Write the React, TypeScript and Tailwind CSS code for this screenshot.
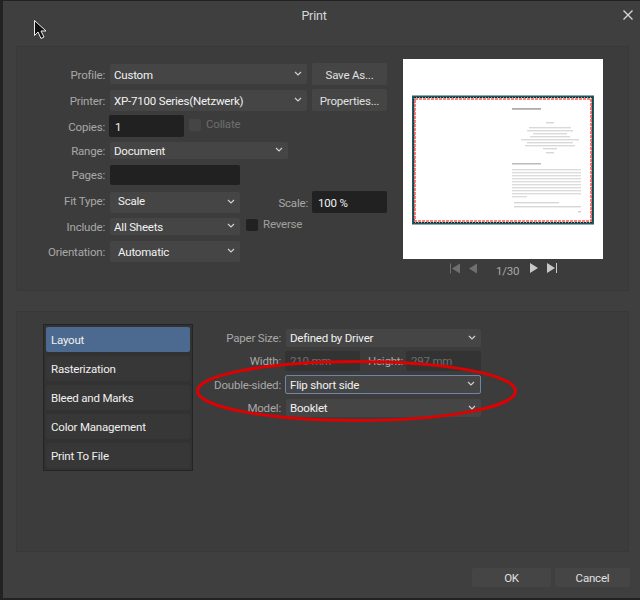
import React from "react";

const fontFace = "font-['Roboto',sans-serif]";

const Chevron: React.FC = () => (
  <svg width="8" height="5" viewBox="0 0 8 5" className="mb-[2px] shrink-0">
    <path d="M1 1l3 3 3-3" fill="none" stroke="#d0d0d0" strokeWidth="1.2" />
  </svg>
);

const Select: React.FC<{ value: string; className: string; textClass?: string }> = ({ value, className, textClass = "pt-[2px]" }) => (
  <div className={`flex items-center justify-between rounded-[2px] bg-[#454545] pr-[5px] text-[#f2f2f2] ${className}`}>
    <span className={`whitespace-nowrap ${textClass}`}>{value}</span>
    <Chevron />
  </div>
);

const Button: React.FC<{ label: string; className: string; textClass?: string }> = ({ label, className, textClass = "pt-[2px]" }) => (
  <div className={`flex items-center justify-center rounded-[2px] bg-[#454545] text-[#e0e0e0] ${className}`}>
    <span className={textClass}>{label}</span>
  </div>
);

const Label: React.FC<{ text: string; className?: string }> = ({ text, className = "" }) => (
  <span className={`text-right whitespace-nowrap text-[#a8a8a8] ${className}`}>{text}</span>
);

const Row: React.FC<{ label: string; className: string; labelClass?: string; children: React.ReactNode }> = ({ label, className, labelClass = "pt-[2px]", children }) => (
  <div className={`flex items-center ${className}`}>
    <Label text={label} className={`w-[88px] shrink-0 ${labelClass}`} />
    <div className="ml-[5px] flex items-center">{children}</div>
  </div>
);

const PreviewPage: React.FC = () => (
  <svg width="200" height="200" viewBox="0 0 200 200" className="block">
    <rect width="200" height="200" fill="#fff" />
    <rect x="10" y="37.5" width="180" height="127" fill="#fff" stroke="#1f5a5e" strokeWidth="2" />
    <rect x="11" y="38.5" width="178" height="125" fill="none" stroke="#1b2b2c" strokeWidth="1.2" strokeDasharray="2 1" />
    <rect x="12" y="40" width="176" height="122" fill="none" stroke="#ff5a5a" strokeWidth="1.6" strokeDasharray="3 1" />
    <g fill="#777" style={{ filter: "blur(0.7px)" }}>
      <rect x="109" y="49" width="29" height="1.8" opacity="0.6" />
      <rect x="143" y="63" width="8" height="1.4" opacity="0.3" />
      <rect x="126" y="68" width="42" height="1.4" opacity="0.28" />
      <rect x="124" y="71" width="46" height="1.4" opacity="0.28" />
      <rect x="130" y="74" width="34" height="1.4" opacity="0.28" />
      <rect x="127" y="77" width="40" height="1.4" opacity="0.28" />
      <rect x="118" y="80" width="58" height="1.4" opacity="0.28" />
      <rect x="124" y="83" width="46" height="1.4" opacity="0.28" />
      <rect x="122" y="86" width="50" height="1.4" opacity="0.28" />
      <rect x="140" y="89" width="14" height="1.4" opacity="0.28" />
      <rect x="143" y="93" width="8" height="1.4" opacity="0.3" />
      <rect x="109" y="104" width="29" height="1.5" opacity="0.5" />
      <rect x="109" y="110" width="69" height="1.4" opacity="0.26" />
      <rect x="109" y="113" width="69" height="1.4" opacity="0.26" />
      <rect x="109" y="116" width="69" height="1.4" opacity="0.26" />
      <rect x="109" y="119" width="69" height="1.4" opacity="0.26" />
      <rect x="109" y="122" width="69" height="1.4" opacity="0.26" />
      <rect x="109" y="125" width="69" height="1.4" opacity="0.26" />
      <rect x="109" y="128" width="69" height="1.4" opacity="0.26" />
      <rect x="109" y="131" width="69" height="1.4" opacity="0.26" />
      <rect x="109" y="134" width="69" height="1.4" opacity="0.26" />
      <rect x="109" y="137" width="15" height="1.4" opacity="0.26" />
      <rect x="111" y="143" width="45" height="1.4" opacity="0.3" />
      <rect x="111" y="147" width="67" height="1.4" opacity="0.3" />
      <rect x="175" y="152" width="3" height="1.4" opacity="0.35" />
    </g>
  </svg>
);

const Pager: React.FC = () => (
  <div className="mt-[2px] flex h-[16px] w-[200px] items-center">
    <svg width="154" height="14" viewBox="0 0 154 14" className="ml-[47px] block shrink-0">
      <path d="M0.5 1.5v10" stroke="#6f6f6f" strokeWidth="1" />
      <path d="M10 1.5v10l-8-5z" fill="#6f6f6f" />
      <path d="M27 1.5v10l-8-5z" fill="#6f6f6f" />
      <path d="M80 1v10l8-5z" fill="#c8c8c8" />
      <path d="M97 1v10l8-5z" fill="#c8c8c8" />
      <path d="M106.5 1v10" stroke="#c8c8c8" strokeWidth="1" />
    </svg>
  </div>
);

const App: React.FC = () => (
  <div className={`relative h-[600px] w-[640px] overflow-hidden border-t border-b-2 border-l-[3px] border-[#222] bg-[#3f3f3f] text-[11.5px] leading-none tracking-[-0.2px] ${fontFace}`}>
    <header className="relative flex h-[29px] items-center justify-center text-[12.5px] text-[#d8d8d8]">
      <span className="pt-[2px] pr-[15px]">Print</span>
      <svg width="10" height="10" viewBox="0 0 10 10" className="absolute top-[9px] right-[7px]">
        <path d="M.5.5l9 9M9.5.5l-9 9" stroke="#d8d8d8" strokeWidth="1.3" />
      </svg>
    </header>

    <section className="mt-[16px] ml-[13px] flex h-[245px] w-[613px] border border-[#383838] bg-[#3c3c3c]">
      <div className="w-[386px] shrink-0 pt-[16px]">
        <Row label="Profile:" className="h-[22px]" labelClass="pt-[4px]">
          <Select value="Custom" className="h-[20px] w-[197px] pl-[4px]" textClass="pt-[4px]" />
          <Button label="Save As..." className="ml-[5px] h-[22px] w-[75px]" textClass="pt-[4px]" />
        </Row>
        <Row label="Printer:" className="mt-[4px] h-[22px]" labelClass="pt-[4px]">
          <Select value="XP-7100 Series(Netzwerk)" className="h-[21px] w-[197px] pl-[4px]" textClass="pt-[4px]" />
          <Button label="Properties..." className="ml-[5px] h-[22px] w-[75px]" textClass="pt-[4px]" />
        </Row>
        <Row label="Copies:" className="mt-[4px] h-[22px]" labelClass="pt-[4px]">
          <div className="-ml-px flex h-[22px] w-[75px] items-center rounded-[2px] bg-[#212121] pt-[4px] pl-[6px] text-[#f2f2f2]">1</div>
          <div className="mb-[3px] ml-[5px] h-[12px] w-[12px] rounded-[2px] bg-[#454545]" />
          <span className="mb-[3px] ml-[5px] text-[#6e6e6e]">Collate</span>
        </Row>
        <Row label="Range:" className="mt-[5px] h-[17px]">
          <Select value="Document" className="h-[17px] w-[178px] pl-[4px]" />
        </Row>
        <Row label="Pages:" className="mt-[6px] h-[20px]">
          <div className="h-[20px] w-[130px] rounded-[2px] bg-[#212121]" />
        </Row>
        <Row label="Fit Type:" className="mt-[6px] h-[22px]" labelClass="">
          <Select value="Scale" className="h-[21px] w-[130px] pl-[8px]" textClass="" />
          <Label text="Scale:" className="w-[68px] pt-[3px]" />
          <div className="ml-[4px] flex h-[22px] w-[75px] items-center rounded-[2px] bg-[#212121] pt-[3px] pl-[6px] text-[#f2f2f2]">100 %</div>
        </Row>
        <Row label="Include:" className="mt-[5px] h-[17px]">
          <Select value="All Sheets" className="h-[17px] w-[130px] pl-[4px]" />
          <div className="mb-[4px] ml-[6px] h-[12px] w-[12px] rounded-[2px] bg-[#212121]" />
          <span className="mb-[3px] ml-[5px] text-[#a0a0a0]">Reverse</span>
        </Row>
        <Row label="Orientation:" className="mt-[6px] h-[21px]">
          <Select value="Automatic" className="h-[21px] w-[130px] pl-[8px]" />
        </Row>
      </div>
      <div className="pt-[12px]">
        <PreviewPage />
        <Pager />
      </div>
    </section>

    <section className="mt-[20px] ml-[13px] flex h-[241px] w-[613px] border border-[#383838] bg-[#3c3c3c] pt-[12px] pl-[26px]">
      <nav className="flex h-[147px] w-[150px] shrink-0 flex-col gap-[4px] border border-[#242424] bg-[#323232] p-[2px] text-[#f0f0f0]">
        <div className="flex h-[25px] items-center rounded-[2px] bg-[#4c6a8f] pt-[2px] pl-[5px]">Layout</div>
        <div className="flex h-[25px] items-center rounded-[2px] bg-[#373737] pt-[2px] pl-[5px]">Rasterization</div>
        <div className="flex h-[25px] items-center rounded-[2px] bg-[#373737] pt-[2px] pl-[5px]">Bleed and Marks</div>
        <div className="flex h-[25px] items-center rounded-[2px] bg-[#373737] pt-[2px] pl-[5px]">Color Management</div>
        <div className="flex h-[25px] items-center rounded-[2px] bg-[#373737] pt-[2px] pl-[5px]">Print To File</div>
      </nav>
      <div className="pt-[5px]">
        <Row label="Paper Size:" className="h-[18px]">
          <Select value="Defined by Driver" className="h-[18px] w-[195px] pl-[4px]" />
        </Row>
        <Row label="Width:" className="mt-[4px] h-[20px]">
          <div className="-ml-px flex h-[20px] w-[75px] items-center rounded-[2px] bg-[#333333] pt-[2px] pl-[5px] text-[#6e6e6e]">210 mm</div>
          <Label text="Height:" className="w-[43px] pt-[2px]" />
          <div className="ml-[3px] flex h-[20px] w-[75px] items-center rounded-[2px] bg-[#333333] pt-[2px] pl-[5px] text-[#6e6e6e]">297 mm</div>
        </Row>
        <Row label="Double-sided:" className="mt-[4px] h-[19px]">
          <Select value="Flip short side" className="-ml-px h-[19px] w-[196px] border border-[#6a86a8] pl-[4px]" />
        </Row>
        <Row label="Model:" className="mt-[5px] h-[18px]">
          <Select value="Booklet" className="h-[18px] w-[195px] pl-[4px]" />
        </Row>
      </div>
    </section>

    <footer className="mt-[16px] flex justify-end gap-[4px] pr-[10px]">
      <Button label="OK" className="h-[19px] w-[79px]" />
      <Button label="Cancel" className="h-[19px] w-[75px]" />
    </footer>

    <span className="absolute top-[265px] left-[493px] text-[#a8a8a8]">1/30</span>

    {/* red annotation drawn over the form */}
    <svg width="640" height="600" viewBox="0 0 640 600" className="pointer-events-none absolute -top-px -left-[3px]">
      <ellipse cx="356.5" cy="391" rx="159" ry="29.5" fill="none" stroke="#e00000" strokeWidth="3" />
      <path d="M34.5 20.5v15l3.5-3.5 3 6.5 3-1.5-3-6h5z" fill="#111" stroke="#eee" strokeWidth="1" />
    </svg>
  </div>
);

export default App;
